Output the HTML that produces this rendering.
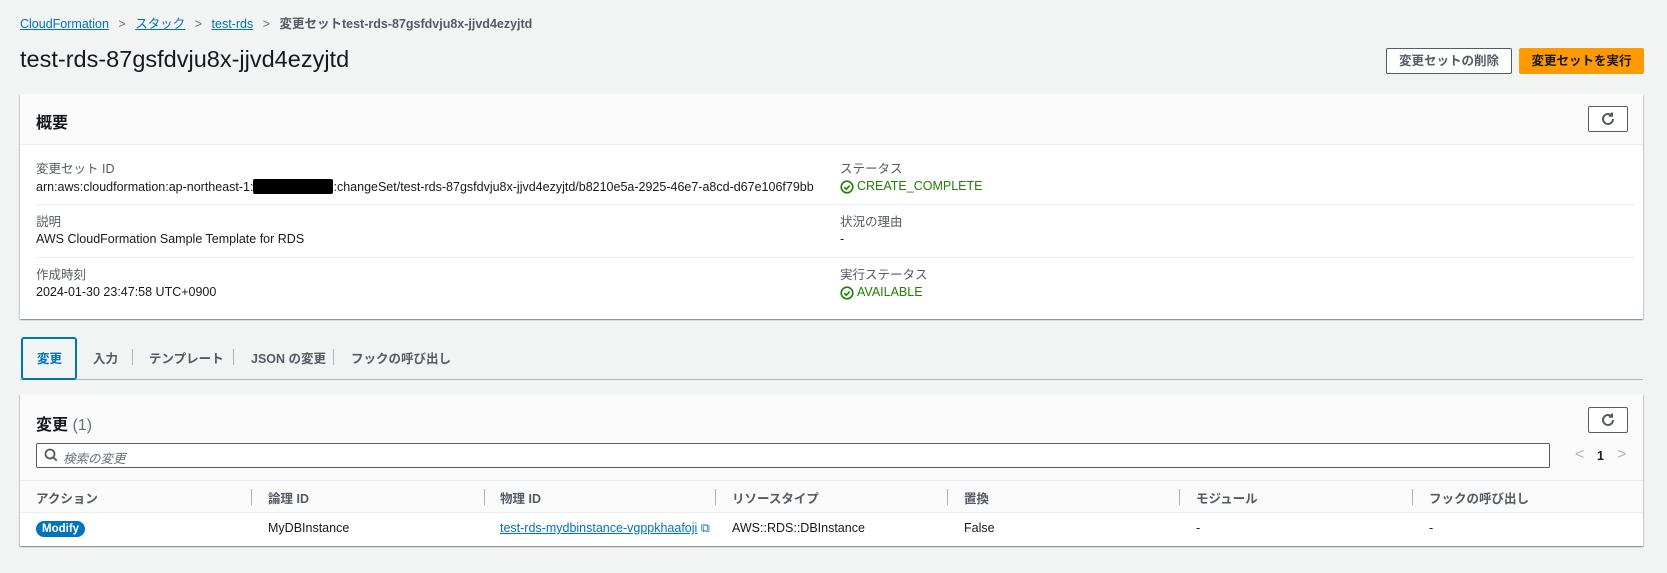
<!DOCTYPE html>
<html><head><meta charset="utf-8">
<style>
*{box-sizing:border-box;margin:0;padding:0}
body{width:1667px;height:573px;background:#f2f3f3;font-family:"Liberation Sans","Noto Sans CJK JP",sans-serif;color:#16191f;font-size:12.5px;position:relative;overflow:hidden}
.a{position:absolute;white-space:nowrap}
a{color:#0073bb;text-decoration:underline}
.panel{position:absolute;background:#fff;box-shadow:0 1px 1px rgba(0,28,36,.3),1px 1px 1px rgba(0,28,36,.15),-1px 1px 1px rgba(0,28,36,.15)}
.hdr{position:absolute;left:0;top:0;right:0;background:#fafafa;border-bottom:1px solid #eaeded}
.btn{position:absolute;border:1px solid #545b64;background:#fff;font-weight:bold;font-size:12.5px;color:#545b64;text-align:center;border-radius:2px}
.lbl{color:#545b64}
.sep{position:absolute;height:1px;background:#eaeded}
.ok{color:#1d8102}
.vs{position:absolute;width:1px;height:16px;background:#aab7b8;top:8px}
.th{font-weight:bold;color:#545b64}
</style></head><body>
<div class="a" style="left:20px;top:13px;font-size:12.5px"><a>CloudFormation</a> <span style="color:#687078;margin:0 6px">&gt;</span> <a>スタック</a> <span style="color:#687078;margin:0 6px">&gt;</span> <a>test-rds</a> <span style="color:#687078;margin:0 6px">&gt;</span> <span style="color:#545b64;font-weight:bold">変更セットtest-rds-87gsfdvju8x-jjvd4ezyjtd</span></div>
<div class="a" style="left:20px;top:46px;font-size:23.5px">test-rds-87gsfdvju8x-jjvd4ezyjtd</div>
<div class="btn" style="left:1386px;top:48px;width:126px;height:26px;line-height:24px">変更セットの削除</div>
<div class="btn" style="left:1519px;top:48px;width:125px;height:26px;line-height:24px;background:#ff9900;border-color:#ff9900;color:#16191f">変更セットを実行</div>

<div class="panel" style="left:20px;top:94px;width:1623px;height:225px">
 <div class="hdr" style="height:51px"></div>
 <div class="a" style="left:16px;top:15px;font-size:16px;font-weight:bold">概要</div>
 <div class="btn" style="left:1568px;top:12px;width:40px;height:26px"><svg width="16" height="16" viewBox="0 0 16 16" style="margin-top:4px"><path d="M13 8a5 5 0 1 1-1.5-3.6M12 1.5v3.2H8.8" fill="none" stroke="#545b64" stroke-width="2"/></svg></div>
 <div class="a lbl" style="left:16px;top:64px">変更セット ID</div>
 <div class="a" style="left:16px;top:85px">arn:aws:cloudformation:ap-northeast-1:<span style="display:inline-block;width:80px;height:15px;background:#000;vertical-align:-3px;border-radius:2px"></span>:changeSet/test-rds-87gsfdvju8x-jjvd4ezyjtd/b8210e5a-2925-46e7-a8cd-d67e106f79bb</div>
 <div class="a lbl" style="left:820px;top:64px">ステータス</div>
 <div class="sep" style="left:16px;right:8px;top:110px"></div>
 <div class="a lbl" style="left:16px;top:117px">説明</div>
 <div class="a" style="left:16px;top:138px">AWS CloudFormation Sample Template for RDS</div>
 <div class="a lbl" style="left:820px;top:117px">状況の理由</div>
 <div class="a" style="left:820px;top:138px">-</div>
 <div class="sep" style="left:16px;right:8px;top:163px"></div>
 <div class="a lbl" style="left:16px;top:170px">作成時刻</div>
 <div class="a" style="left:16px;top:191px">2024-01-30 23:47:58 UTC+0900</div>
 <div class="a lbl" style="left:820px;top:170px">実行ステータス</div>
</div>
<svg class="a" style="left:840px;top:180px" width="14" height="14" viewBox="0 0 14 14"><circle cx="7" cy="7" r="5.8" fill="none" stroke="#1d8102" stroke-width="1.6"/><path d="M4.3 7.2l2 2 3.4-3.6" fill="none" stroke="#1d8102" stroke-width="1.6"/></svg>
<div class="a ok" style="left:857px;top:179px">CREATE_COMPLETE</div>
<svg class="a" style="left:840px;top:286px" width="14" height="14" viewBox="0 0 14 14"><circle cx="7" cy="7" r="5.8" fill="none" stroke="#1d8102" stroke-width="1.6"/><path d="M4.3 7.2l2 2 3.4-3.6" fill="none" stroke="#1d8102" stroke-width="1.6"/></svg>
<div class="a ok" style="left:857px;top:285px">AVAILABLE</div>

<div class="a" style="left:20px;top:379px;width:1623px;height:1px;background:#aab7b8"></div>
<div class="a" style="left:21px;top:337px;width:56px;height:43px;border:1px solid #0073bb;border-radius:3px;box-shadow:0 0 0 1px #0073bb inset;"></div>
<div class="a" style="left:37px;top:348px;font-weight:bold;color:#0073bb">変更</div>
<div class="a th" style="left:93px;top:348px">入力</div>
<div class="vs" style="left:132px;top:349px"></div>
<div class="a th" style="left:149px;top:348px">テンプレート</div>
<div class="vs" style="left:233px;top:349px"></div>
<div class="a th" style="left:251px;top:348px">JSON の変更</div>
<div class="vs" style="left:333px;top:349px"></div>
<div class="a th" style="left:351px;top:348px">フックの呼び出し</div>

<div class="panel" style="left:20px;top:394px;width:1623px;height:152px">
 <div class="hdr" style="height:87px;border-bottom:1px solid #eaeded"></div>
 <div class="a" style="left:16px;top:17px;font-size:16px"><b>変更</b> <span style="color:#687078">(1)</span></div>
 <div class="btn" style="left:1568px;top:13px;width:40px;height:26px"><svg width="16" height="16" viewBox="0 0 16 16" style="margin-top:4px"><path d="M13 8a5 5 0 1 1-1.5-3.6M12 1.5v3.2H8.8" fill="none" stroke="#545b64" stroke-width="2"/></svg></div>
 <div class="a" style="left:16px;top:49px;width:1514px;height:25px;border:1px solid #545b64;background:#fff;border-radius:2px"></div>
 <svg class="a" style="left:24px;top:54px" width="14" height="14" viewBox="0 0 14 14"><circle cx="6" cy="6" r="4.5" fill="none" stroke="#545b64" stroke-width="1.8"/><path d="M9.3 9.3l3.5 3.5" stroke="#545b64" stroke-width="1.8"/></svg>
 <div class="a" style="left:43px;top:54px;color:#687078;font-style:italic">検索の変更</div>
 <div class="a" style="left:1555px;top:52px;color:#aab7b8;font-size:16px">&lt;</div>
 <div class="a" style="left:1577px;top:55px;font-weight:bold">1</div>
 <div class="a" style="left:1597px;top:52px;color:#aab7b8;font-size:16px">&gt;</div>
 <div class="a" style="left:0;right:0;top:87px;height:32px;background:#fafafa;border-bottom:1px solid #eaeded"></div>
 <div class="a th" style="left:16px;top:94px">アクション</div>
 <div class="vs" style="left:231px;top:95px"></div><div class="a th" style="left:248px;top:94px">論理 ID</div>
 <div class="vs" style="left:464px;top:95px"></div><div class="a th" style="left:480px;top:94px">物理 ID</div>
 <div class="vs" style="left:695px;top:95px"></div><div class="a th" style="left:712px;top:94px">リソースタイプ</div>
 <div class="vs" style="left:927px;top:95px"></div><div class="a th" style="left:944px;top:94px">置換</div>
 <div class="vs" style="left:1159px;top:95px"></div><div class="a th" style="left:1176px;top:94px">モジュール</div>
 <div class="vs" style="left:1392px;top:95px"></div><div class="a th" style="left:1409px;top:94px">フックの呼び出し</div>
 <div class="a" style="left:16px;top:127px;background:#0073bb;color:#fff;font-weight:bold;font-size:11.5px;border-radius:10px;padding:2px 6px">Modify</div>
 <div class="a" style="left:248px;top:127px">MyDBInstance</div>
 <div class="a" style="left:480px;top:127px"><a>test-rds-mydbinstance-vgppkhaafoji</a> <span style="color:#0073bb">⧉</span></div>
 <div class="a" style="left:712px;top:127px">AWS::RDS::DBInstance</div>
 <div class="a" style="left:944px;top:127px">False</div>
 <div class="a" style="left:1176px;top:127px">-</div>
 <div class="a" style="left:1409px;top:127px">-</div>
</div>
</body></html>
